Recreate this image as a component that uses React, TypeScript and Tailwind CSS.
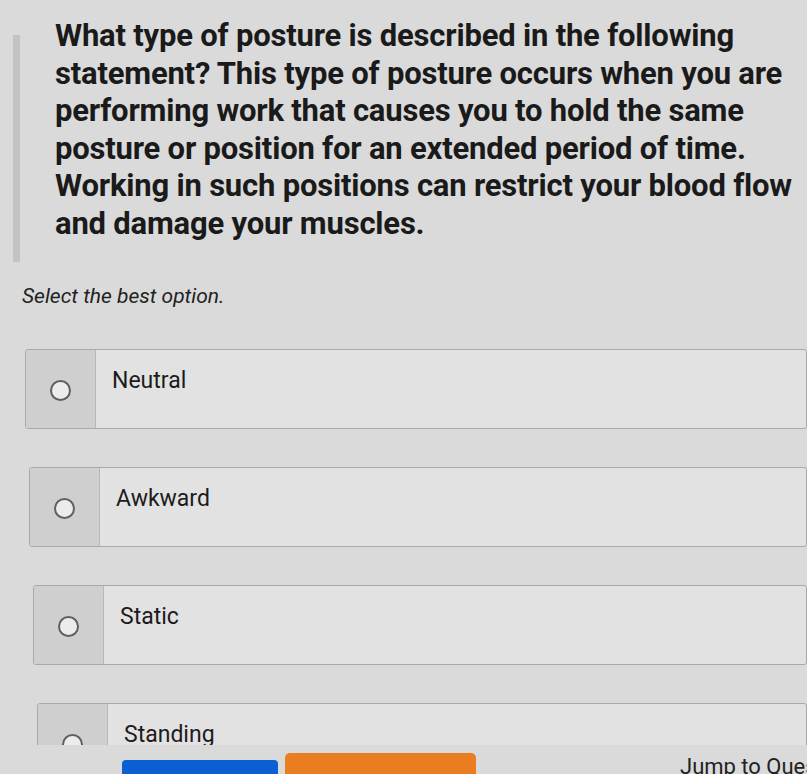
import React from "react";

const options = [
  { label: "Neutral", ml: "ml-[25px]" },
  { label: "Awkward", ml: "ml-[29px]" },
  { label: "Static", ml: "ml-[33px]" },
  { label: "Standing", ml: "ml-[37px]" },
];

const lines = [
  "What type of posture is described in the following",
  "statement? This type of posture occurs when you are",
  "performing work that causes you to hold the same",
  "posture or position for an extended period of time.",
  "Working in such positions can restrict your blood flow",
  "and damage your muscles.",
];

export default function App() {
  return (
    <div
      className="w-[807px] h-[774px] overflow-hidden bg-[#dadada] text-[#1c1c1c]"
      style={{ fontFamily: "Roboto, 'Liberation Sans', sans-serif" }}
    >
      <div className="flex items-start pt-[17px]">
        <div className="ml-[13px] mt-[18px] h-[227px] w-[7px] bg-[#c3c3c3] shrink-0" />
        <p className="ml-[35px] w-[760px] text-[31px] leading-[37.5px] font-bold text-[#1a1a1a] tracking-[-0.2px] whitespace-nowrap">
          {lines.map((l, i) => (
            <React.Fragment key={i}>
              {l}
              {i < lines.length - 1 && <br />}
            </React.Fragment>
          ))}
        </p>
      </div>

      <p className="ml-[22px] mt-[22px] text-[21px] leading-[24px] italic text-[#222]">
        Select the best option.
      </p>

      <div className="mt-[41px] h-[396px] overflow-hidden flex flex-col gap-[38px]">
        {options.map((o) => (
          <div
            key={o.label}
            className={`${o.ml} h-[80px] shrink-0 flex border border-[#a9a9a9] rounded-[3px] bg-[#e2e2e2] overflow-hidden`}
          >
            <div className="w-[70px] shrink-0 bg-[#cfcfcf] border-r border-[#b8b8b8] flex items-center justify-center">
              <div className="w-[21px] h-[21px] rounded-full border-2 border-[#5f5f5f] bg-[#ececec] mt-[2px]" />
            </div>
            <div className="pl-[16px] pt-[17px] text-[23px] leading-[28px] text-[#1c1c1c]">
              {o.label}
            </div>
          </div>
        ))}
      </div>

      <div className="flex items-start mt-[6px]">
        <div className="ml-[122px] mt-[9px] w-[156px] h-[40px] shrink-0 rounded-t-[4px] bg-[#0b5fd3]" />
        <div className="ml-[7px] mt-[2px] w-[191px] h-[40px] shrink-0 rounded-t-[5px] bg-[#ea7d1f]" />
        <div className="ml-[204px] mt-[2px] shrink-0 text-[22px] leading-[28px] whitespace-nowrap text-[#222]">
          Jump to Question
        </div>
      </div>
    </div>
  );
}
